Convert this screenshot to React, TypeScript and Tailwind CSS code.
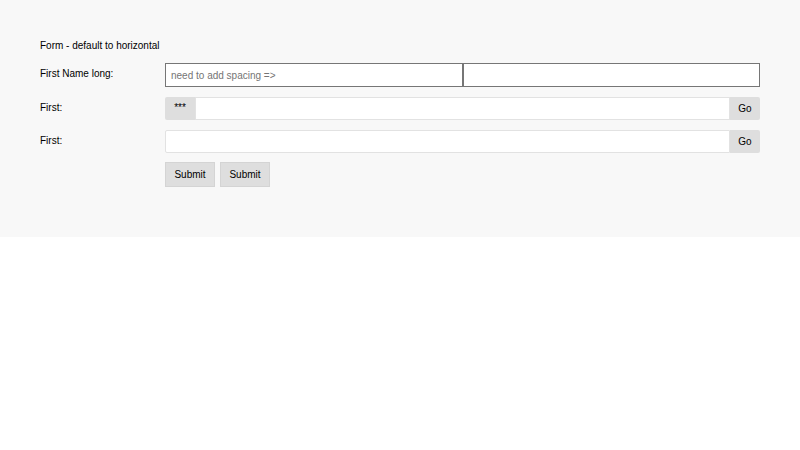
import React from 'react'

export default function App() {
  return (
    <div className="bg-[#f8f8f8] px-10 pt-[40px] pb-[50px] text-[10px] text-black font-['Liberation_Sans',Arial,sans-serif]">
      <p className="mb-[11px] leading-[12px]">Form - default to horizontal</p>

      {/* row 1 */}
      <div className="flex items-center mb-[10px]">
        <label className="w-[125px] shrink-0 pb-[3px]">First Name long:</label>
        <div className="flex flex-1">
          <input
            placeholder="need to add spacing =>"
            className="h-[24px] flex-1 min-w-0 border border-[#767676] bg-white px-[5px] text-[10px] placeholder:text-[#757575] outline-none"
          />
          <input className="h-[24px] flex-1 min-w-0 border border-[#767676] bg-white px-[5px] text-[10px] outline-none" />
        </div>
      </div>

      {/* row 2 */}
      <div className="flex items-center mb-[10px]">
        <label className="w-[125px] shrink-0 pb-[2px]">First:</label>
        <div className="flex flex-1 h-[23px]">
          <span className="w-[30px] flex items-center justify-center bg-[#dedede] rounded-l-[2px] text-[10px] pb-[2px]">***</span>
          <input className="flex-1 min-w-0 border border-[#e2e2e2] bg-white px-[5px] text-[10px] outline-none" />
          <button className="w-[30px] bg-[#dedede] rounded-r-[2px] text-[10px]">Go</button>
        </div>
      </div>

      {/* row 3 */}
      <div className="flex items-center mb-[9px]">
        <label className="w-[125px] shrink-0 pb-[2px]">First:</label>
        <div className="flex flex-1 h-[23px]">
          <input className="flex-1 min-w-0 border border-[#e2e2e2] rounded-l-[2px] bg-white px-[5px] text-[10px] outline-none" />
          <button className="w-[30px] bg-[#dedede] rounded-r-[2px] text-[10px]">Go</button>
        </div>
      </div>

      {/* buttons */}
      <div className="flex gap-[5px] pl-[125px]">
        <button className="h-[25px] w-[50px] bg-[#dedede] border border-[#d4d4d4] text-[10px]">Submit</button>
        <button className="h-[25px] w-[50px] bg-[#dedede] border border-[#d4d4d4] text-[10px]">Submit</button>
      </div>
    </div>
  )
}
